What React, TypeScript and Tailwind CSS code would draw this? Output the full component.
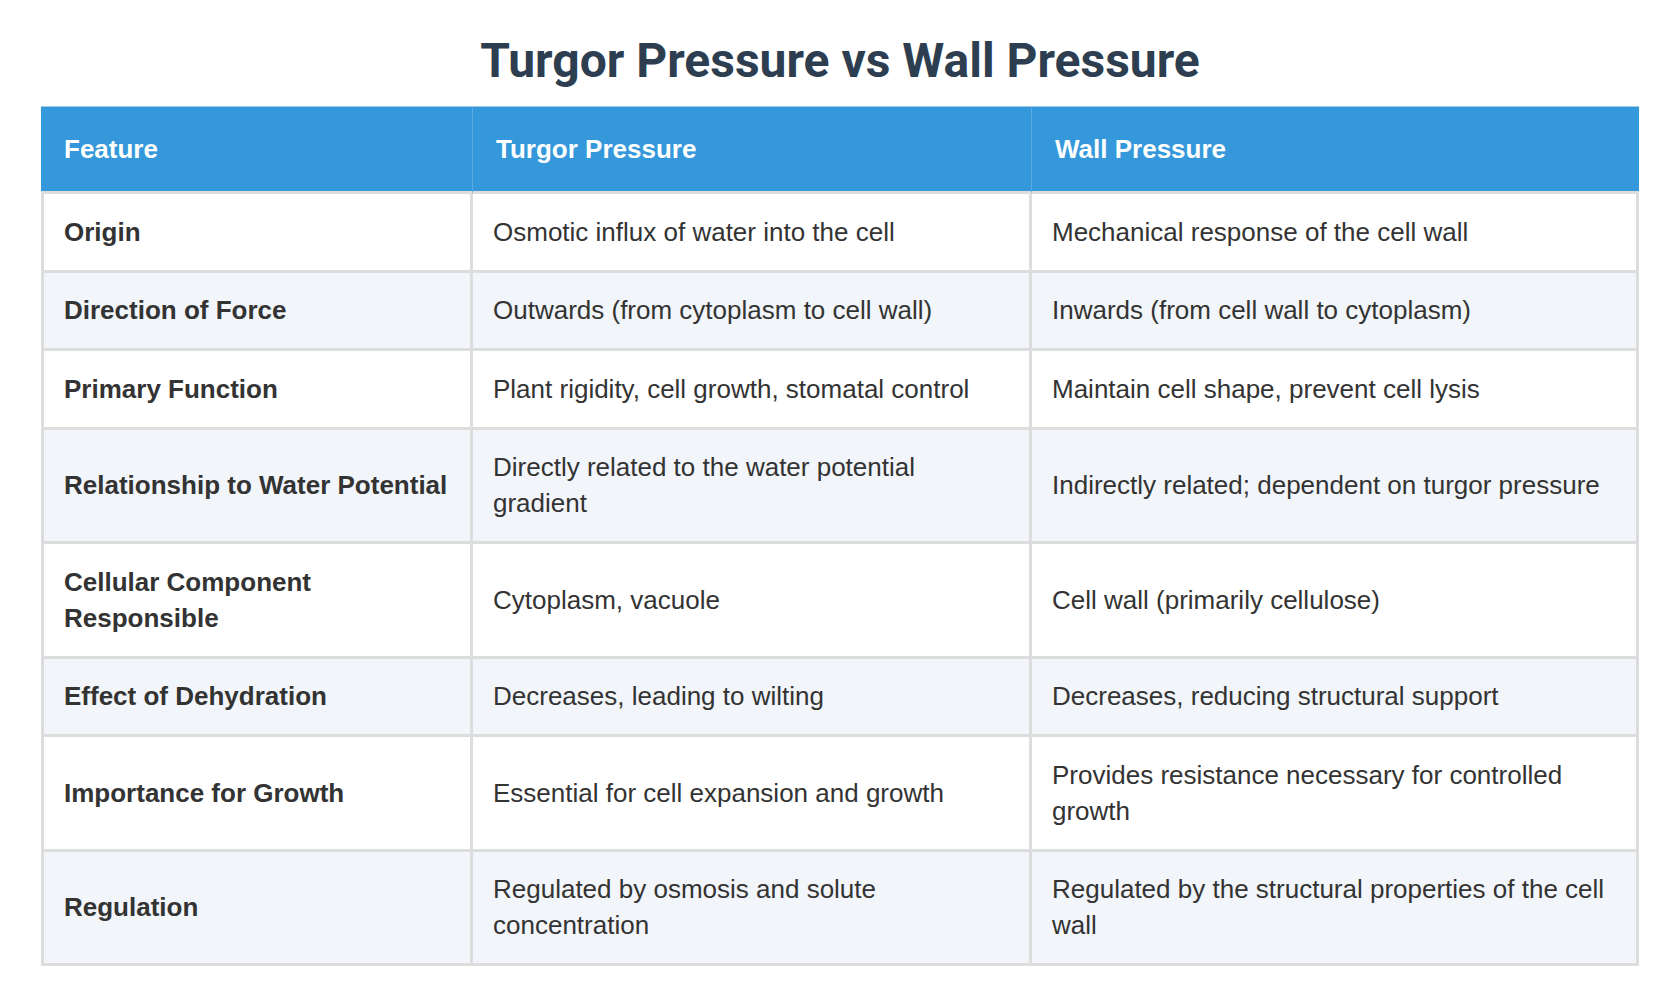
const rows: [string, string, string][] = [
  ["Origin", "Osmotic influx of water into the cell", "Mechanical response of the cell wall"],
  ["Direction of Force", "Outwards (from cytoplasm to cell wall)", "Inwards (from cell wall to cytoplasm)"],
  ["Primary Function", "Plant rigidity, cell growth, stomatal control", "Maintain cell shape, prevent cell lysis"],
  ["Relationship to Water Potential", "Directly related to the water potential gradient", "Indirectly related; dependent on turgor pressure"],
  ["Cellular Component Responsible", "Cytoplasm, vacuole", "Cell wall (primarily cellulose)"],
  ["Effect of Dehydration", "Decreases, leading to wilting", "Decreases, reducing structural support"],
  ["Importance for Growth", "Essential for cell expansion and growth", "Provides resistance necessary for controlled growth"],
  ["Regulation", "Regulated by osmosis and solute concentration", "Regulated by the structural properties of the cell wall"],
];

function HeaderCell({ children, last }: { children: string; last?: boolean }) {
  return (
    <th
      className={
        "bg-[#3498db] border-t border-t-[#9ccbec] border-b-[3px] border-b-[#dddddd] px-[23px] pt-[24px] pb-[24px] text-left align-middle font-bold text-white text-[26px] leading-[36px] " +
        (last ? "" : "border-r border-r-[#5aa9e0]")
      }
    >
      {children}
    </th>
  );
}

function BodyRow({ cells, even }: { cells: [string, string, string]; even: boolean }) {
  const bg = even ? "bg-[#f2f5f9]" : "bg-white";
  return (
    <tr className={bg}>
      <td className="border-l-[3px] border-r-[3px] border-b-[3px] border-[#dddddd] px-[20px] py-[19.75px] align-middle font-bold text-[#333333] text-[26px] leading-[36px]">
        {cells[0]}
      </td>
      <td className="border-r-[3px] border-b-[3px] border-[#dddddd] px-[20px] py-[19.75px] align-middle text-[#333333] text-[26px] leading-[36px]">
        {cells[1]}
      </td>
      <td className="border-r-[3px] border-b-[3px] border-[#dddddd] px-[20px] py-[19.75px] align-middle text-[#333333] text-[26px] leading-[36px]">
        {cells[2]}
      </td>
    </tr>
  );
}

export default function App() {
  return (
    <div className="min-h-screen bg-white px-[41px] pt-[33px] font-['Liberation_Sans',Arial,sans-serif]">
      <h1 className="mb-[17px] text-center font-['Roboto',sans-serif] text-[48px] font-bold leading-[56px] text-[#2c3e50]">
        Turgor Pressure vs Wall Pressure
      </h1>
      <table className="w-full table-fixed border-separate border-spacing-0">
        <colgroup>
          <col className="w-[432px]" />
          <col className="w-[559px]" />
          <col />
        </colgroup>
        <thead>
          <tr>
            <HeaderCell>Feature</HeaderCell>
            <HeaderCell>Turgor Pressure</HeaderCell>
            <HeaderCell last>Wall Pressure</HeaderCell>
          </tr>
        </thead>
        <tbody>
          {rows.map((r, i) => (
            <BodyRow key={r[0]} cells={r} even={i % 2 === 1} />
          ))}
        </tbody>
      </table>
    </div>
  );
}
